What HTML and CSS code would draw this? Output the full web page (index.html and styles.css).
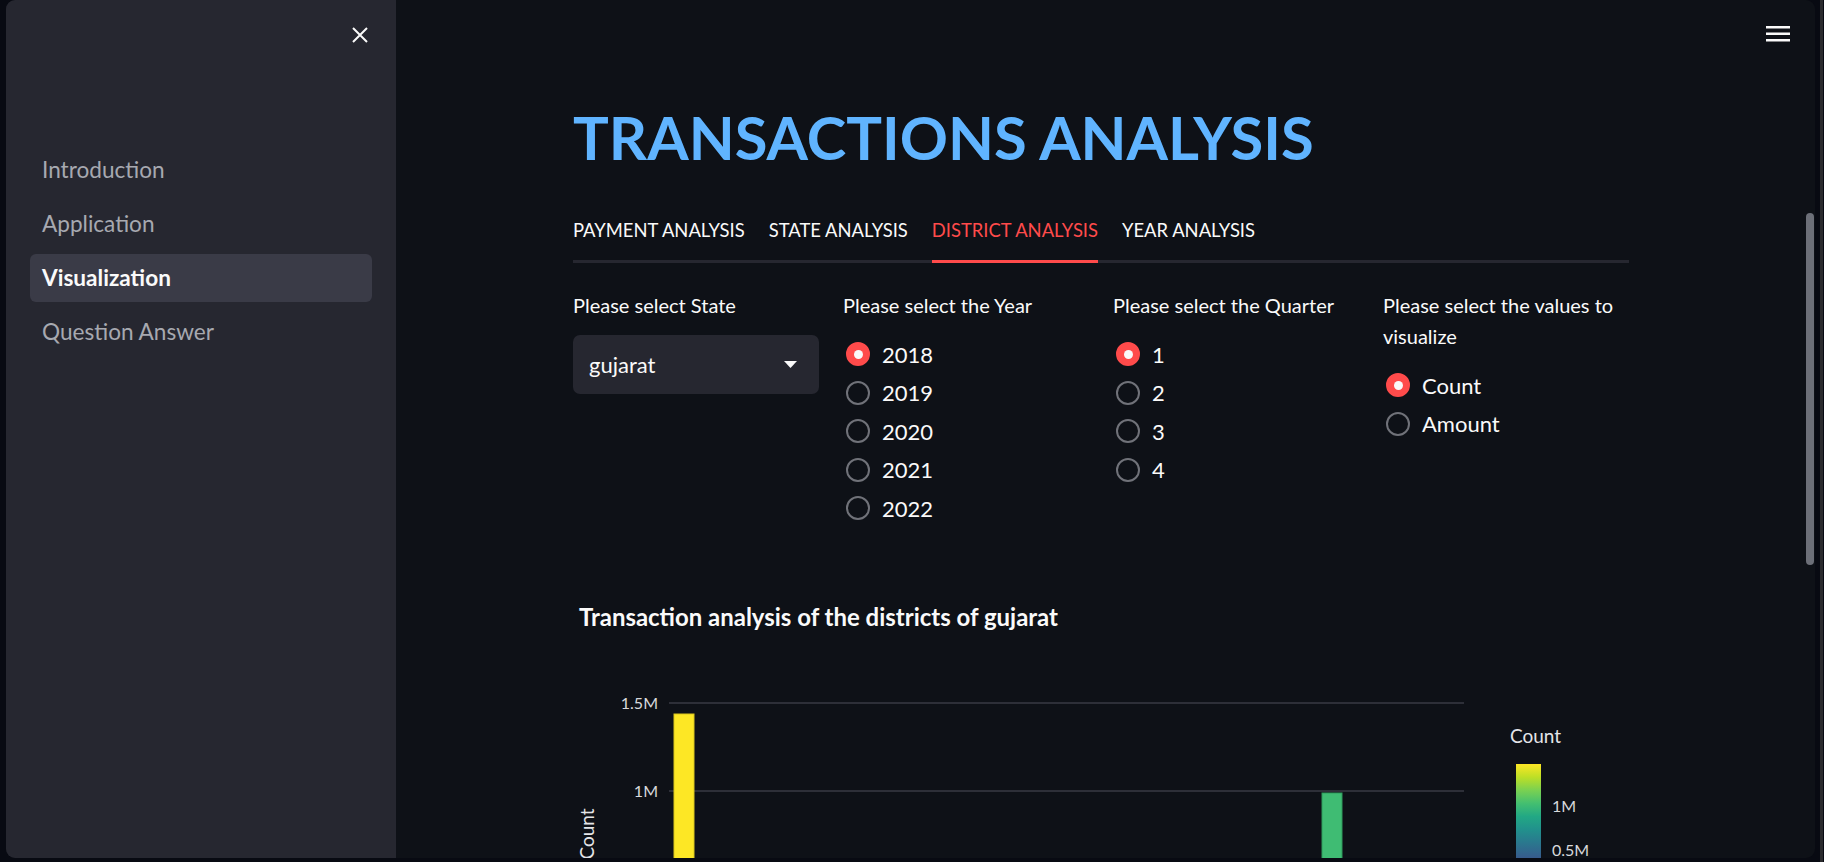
FILE: index.html
```html
<!DOCTYPE html>
<html lang="en">

<head>
    <meta charset="UTF-8">
    <meta name="viewport" content="width=device-width, initial-scale=1.0">
    <title>Transactions Analysis</title>
    <link rel="stylesheet" href="styles.css">
</head>

<body>
    <div class="app">
        <aside class="sidebar">
            <button class="close_btn">
                <svg width="16" height="16" viewBox="0 0 16 16">
                    <path d="M1 1 L15 15 M15 1 L1 15" stroke="#fafafa" stroke-width="2" fill="none" />
                </svg>
            </button>
            <ul class="nav">
                <li>Introduction</li>
                <li>Application</li>
                <li class="active">Visualization</li>
                <li>Question Answer</li>
            </ul>
        </aside>

        <main class="main">
            <button class="menu_btn">
                <svg width="24" height="16" viewBox="0 0 24 16">
                    <rect x="0" y="0" width="24" height="2.5" fill="#fafafa" />
                    <rect x="0" y="6.5" width="24" height="2.5" fill="#fafafa" />
                    <rect x="0" y="13" width="24" height="2.5" fill="#fafafa" />
                </svg>
            </button>

            <div class="block">
                <h1 class="title">TRANSACTIONS ANALYSIS</h1>

                <div class="tabs">
                    <span class="tab">PAYMENT ANALYSIS</span>
                    <span class="tab">STATE ANALYSIS</span>
                    <span class="tab active">DISTRICT ANALYSIS</span>
                    <span class="tab">YEAR ANALYSIS</span>
                </div>

                <div class="filters">
                    <div class="col">
                        <p class="label">Please select State</p>
                        <div class="select">
                            <span>gujarat</span>
                            <svg width="13" height="7" viewBox="0 0 13 7">
                                <polygon points="0,0 13,0 6.5,7" fill="#fafafa" />
                            </svg>
                        </div>
                    </div>
                    <div class="col">
                        <p class="label">Please select the Year</p>
                        <div class="radio_group">
                            <label class="radio checked"><span class="dot"></span>2018</label>
                            <label class="radio"><span class="dot"></span>2019</label>
                            <label class="radio"><span class="dot"></span>2020</label>
                            <label class="radio"><span class="dot"></span>2021</label>
                            <label class="radio"><span class="dot"></span>2022</label>
                        </div>
                    </div>
                    <div class="col">
                        <p class="label">Please select the Quarter</p>
                        <div class="radio_group">
                            <label class="radio checked"><span class="dot"></span>1</label>
                            <label class="radio"><span class="dot"></span>2</label>
                            <label class="radio"><span class="dot"></span>3</label>
                            <label class="radio"><span class="dot"></span>4</label>
                        </div>
                    </div>
                    <div class="col">
                        <p class="label">Please select the values to visualize</p>
                        <div class="radio_group">
                            <label class="radio checked"><span class="dot"></span>Count</label>
                            <label class="radio"><span class="dot"></span>Amount</label>
                        </div>
                    </div>
                </div>

                <div class="chart">
                    <svg width="1056" height="300" viewBox="0 0 1056 300">
                        <defs>
                            <linearGradient id="viridis" gradientUnits="userSpaceOnUse" x1="0" y1="184" x2="0" y2="315">
                                <stop offset="0" stop-color="#fde725" />
                                <stop offset="0.1" stop-color="#bddf26" />
                                <stop offset="0.2" stop-color="#7ad151" />
                                <stop offset="0.3" stop-color="#44bf70" />
                                <stop offset="0.4" stop-color="#22a884" />
                                <stop offset="0.5" stop-color="#21918c" />
                                <stop offset="0.6" stop-color="#2a788e" />
                                <stop offset="0.7" stop-color="#355f8d" />
                                <stop offset="0.8" stop-color="#414487" />
                                <stop offset="0.9" stop-color="#482475" />
                                <stop offset="1" stop-color="#440154" />
                            </linearGradient>
                        </defs>

                        <text class="chart_title" x="6" y="46" textLength="479" lengthAdjust="spacingAndGlyphs">Transaction analysis of the districts of gujarat</text>

                        <!-- grid -->
                        <line class="grid" x1="96" y1="123" x2="891" y2="123" />
                        <line class="grid" x1="96" y1="211" x2="891" y2="211" />
                        <text class="tick" x="85" y="129" text-anchor="end">1.5M</text>
                        <text class="tick" x="85" y="217" text-anchor="end">1M</text>
                        <text class="axis_title" transform="translate(21,254) rotate(-90)" text-anchor="middle">Count</text>

                        <!-- bars -->
                        <rect x="101" y="134" width="20" height="200" fill="#fde725" stroke="#d9c61f" stroke-width="1" />
                        <rect x="749" y="213" width="20" height="120" fill="#3fbc73" stroke="#2f9a5c" stroke-width="1" />

                        <!-- colorbar -->
                        <text class="legend_title" x="937" y="163">Count</text>
                        <rect x="943" y="184" width="25" height="140" fill="url(#viridis)" />
                        <text class="tick" x="979" y="232">1M</text>
                        <text class="tick" x="979" y="276">0.5M</text>
                    </svg>
                </div>
            </div>

            <div class="scroll_thumb"></div>
        </main>
    </div>
    <div class="edge"></div>
</body>

</html>
```

FILE: styles.css
```css
* {
    margin: 0;
    padding: 0;
    box-sizing: border-box;
}

li {
    list-style: none;
}

button {
    border: none;
    background: none;
    cursor: pointer;
}

html,
body {
    height: 100%;
    overflow: hidden;
}

body {
    display: flex;
    background: #080a12;
    font-family: Lato, "Noto Sans", sans-serif;
    color: #fafafa;
}

.app {
    display: flex;
    width: 1809px;
    height: 858px;
    margin-left: 6px;
    border-radius: 9px;
    overflow: hidden;
    background: #0e1117;
}

.edge {
    width: 3px;
    height: 100%;
    margin-left: 5px;
    background: #2b2b2e;
}

/* sidebar */

.sidebar {
    width: 390px;
    flex-shrink: 0;
    background: #262730;
    position: relative;
}

.sidebar .close_btn {
    position: absolute;
    top: 27px;
    right: 28px;
    width: 16px;
    height: 16px;
    display: flex;
}

.nav {
    padding-top: 146px;
}

.nav li {
    height: 48px;
    line-height: 48px;
    margin: 0 24px 6px;
    padding-left: 12px;
    border-radius: 6px;
    font-size: 22.6px;
    color: #a7a9b0;
    cursor: pointer;
}

.nav li.active {
    background: #3a3b47;
    color: #fafafa;
    font-weight: 700;
}

/* main */

.main {
    flex: 1;
    position: relative;
    overflow: hidden;
}

.menu_btn {
    position: absolute;
    top: 26px;
    right: 25px;
    display: flex;
}

.scroll_thumb {
    position: absolute;
    top: 213px;
    right: 1px;
    width: 8px;
    height: 352px;
    border-radius: 4px;
    background: #6c6f78;
}

.block {
    width: 1056px;
    margin-left: 177px;
    padding-top: 101px;
}

.title {
    font-size: 59.7px;
    line-height: 72px;
    font-weight: 700;
    color: #60b4ff;
}

.tabs {
    display: flex;
    gap: 24px;
    margin-top: 42px;
    border-bottom: 3px solid #262730;
}

.tab {
    line-height: 30px;
    padding-bottom: 15px;
    margin-bottom: -3px;
    border-bottom: 3px solid transparent;
    font-size: 18.4px;
    color: #fafafa;
    cursor: pointer;
}

.tab.active {
    color: #ff4b4b;
    border-bottom-color: #ff4b4b;
}

/* filters */

.filters {
    display: grid;
    grid-template-columns: repeat(4, 246px);
    column-gap: 24px;
    align-items: start;
    margin-top: 27px;
}

.label {
    font-size: 20px;
    line-height: 31px;
    color: #fafafa;
    margin-bottom: 14px;
}

.select {
    height: 59px;
    border-radius: 7px;
    background: #262730;
    display: flex;
    align-items: center;
    justify-content: space-between;
    padding: 0 22px 0 16px;
    font-size: 22px;
}

.radio {
    display: flex;
    align-items: center;
    gap: 12px;
    height: 38.5px;
    padding-left: 3px;
    font-size: 22px;
    color: #fafafa;
}

.radio .dot {
    width: 24px;
    height: 24px;
    border-radius: 50%;
    border: 2.5px solid #707279;
    display: flex;
    align-items: center;
    justify-content: center;
}

.radio.checked .dot {
    background: #ff4b4b;
    border-color: #ff4b4b;
}

.radio.checked .dot::after {
    content: "";
    width: 9px;
    height: 9px;
    border-radius: 50%;
    background: #fafafa;
}

/* chart */

.chart {
    margin-top: 52px;
}

.chart svg {
    display: block;
    font-family: Lato, "Noto Sans", sans-serif;
}

.chart_title {
    font-size: 24px;
    font-weight: 700;
    fill: #fafafa;
}

.grid {
    stroke: #383a44;
    stroke-width: 1.5;
}

.tick {
    font-size: 16px;
    fill: #d8d9dc;
}

.axis_title,
.legend_title {
    font-size: 19px;
    fill: #e4e5e8;
}
```
